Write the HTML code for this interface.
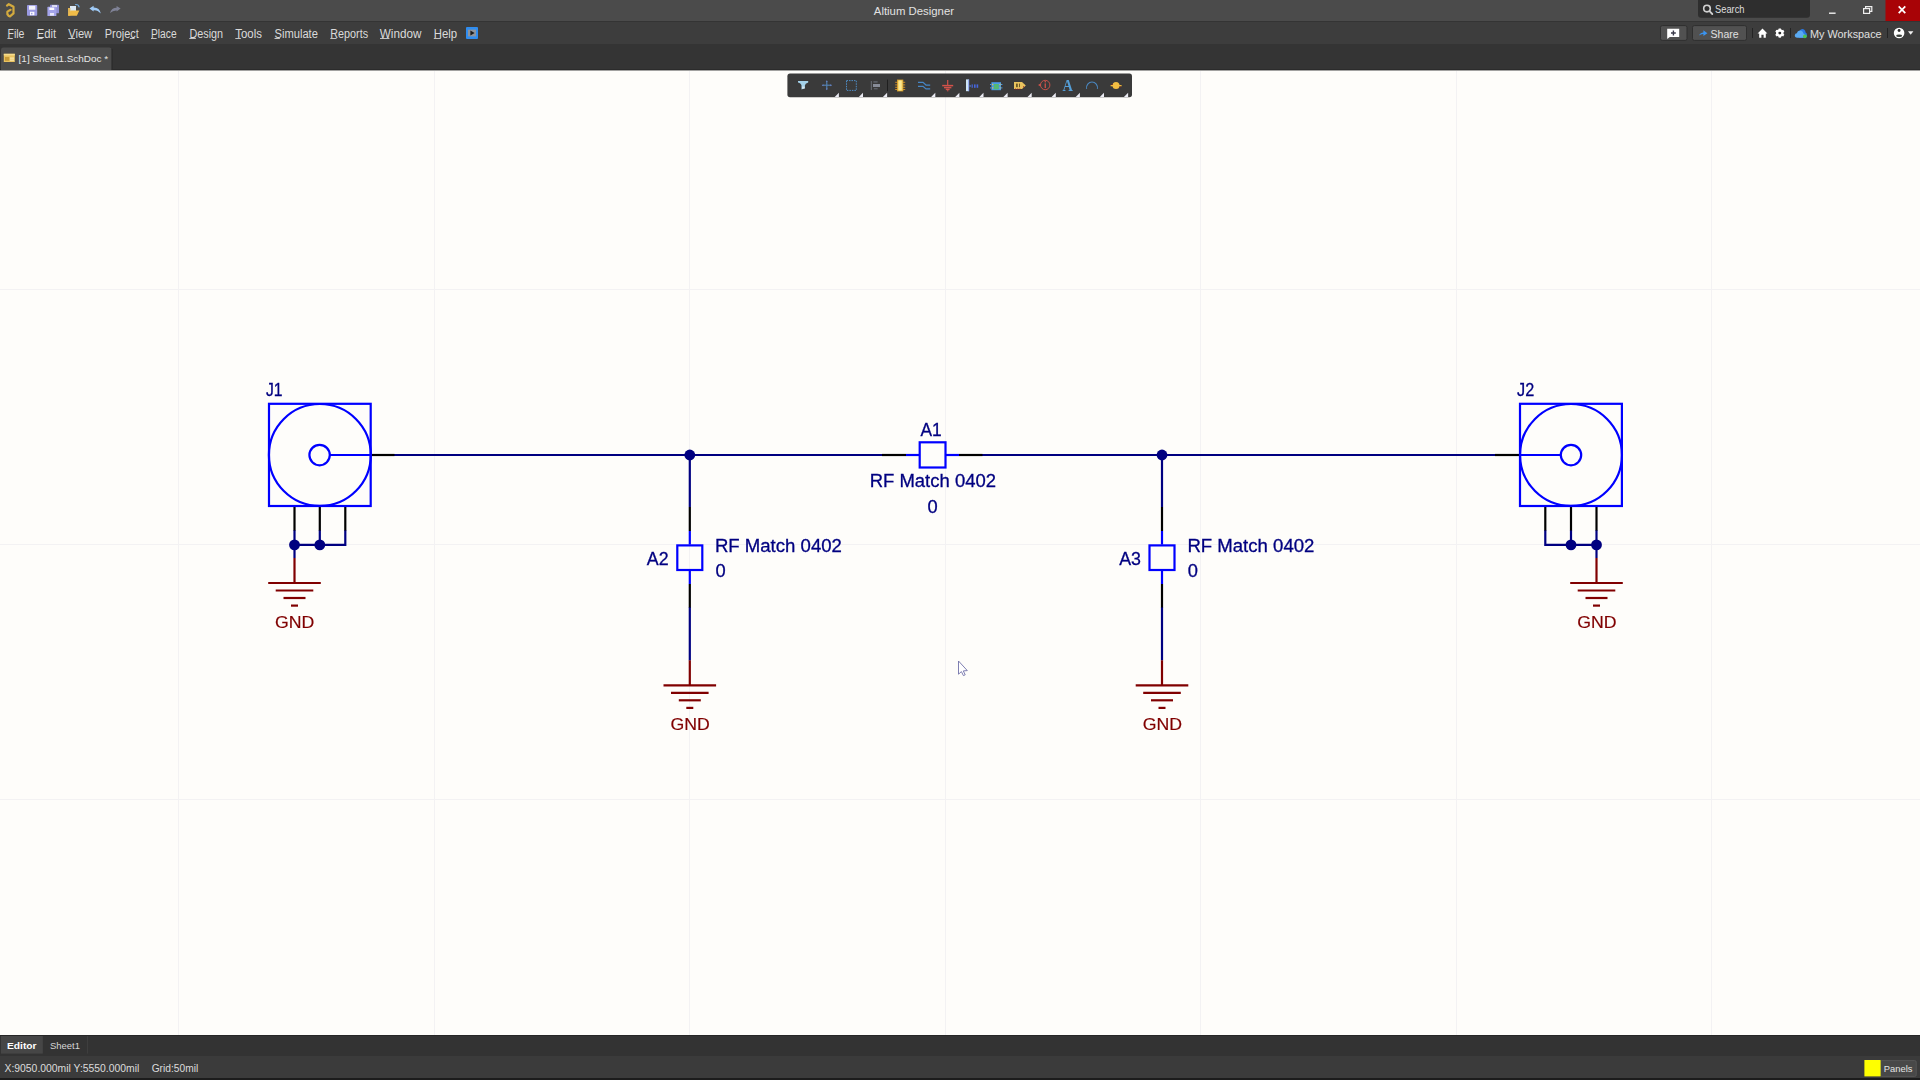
<!DOCTYPE html>
<html><head><meta charset="utf-8"><title>Altium Designer</title>
<style>
*{box-sizing:border-box;margin:0;padding:0}
html,body{width:1920px;height:1080px;overflow:hidden;background:#fefdfa;font-family:"Liberation Sans",sans-serif;}
.abs{position:absolute}
#title{left:0;top:0;width:1920px;height:21px;background:#4b4b4b}
#menu{left:0;top:21px;width:1920px;height:23px;background:#3d3d3d;border-top:1px solid #343434}
#tabs{left:0;top:44px;width:1920px;height:26px;background:#343434;border-bottom:1px solid #2b2b2b}
#canvas{left:0;top:70px;width:1920px;height:965px;background:#fefdfa}
#btabs{left:0;top:1035px;width:1920px;height:21px;background:#333333}
#status{left:0;top:1056px;width:1920px;height:24px;background:#3b3b3b}
.t{position:absolute;white-space:nowrap;line-height:1;color:#dcdcdc}
.m{font-size:12px;top:28px}
.m u{text-decoration:underline;text-underline-offset:1px}
</style></head><body>
<div id="title" class="abs"></div>
<div id="menu" class="abs"></div>
<div id="tabs" class="abs"></div>
<div id="canvas" class="abs"></div>
<div id="btabs" class="abs"></div>
<div id="status" class="abs"></div>
<!--TOP_START--><svg class="abs" style="left:0;top:0" width="1920" height="70" viewBox="0 0 1920 70" font-family="Liberation Sans, sans-serif">
<!-- title text -->
<text x="873.8" y="14.9" font-size="11.5" fill="#e2e2e2" textLength="80.2" lengthAdjust="spacingAndGlyphs">Altium Designer</text>
<!-- search box -->
<rect x="1698" y="-3" width="112" height="20.8" rx="3" fill="#2e2e2e"/>
<circle cx="1707" cy="8.6" r="3.3" fill="none" stroke="#d0d0d0" stroke-width="1.6"/>
<line x1="1709.5" y1="11.2" x2="1712.3" y2="14" stroke="#d0d0d0" stroke-width="1.8" stroke-linecap="round"/>
<text x="1715" y="12.8" font-size="10" fill="#dedede" textLength="29.5" lengthAdjust="spacingAndGlyphs">Search</text>
<!-- window buttons -->
<rect x="1829" y="12.5" width="6.6" height="1.4" fill="#f0f0f0"/>
<g fill="none" stroke="#f0f0f0" stroke-width="1.2"><rect x="1863.6" y="8.6" width="6" height="4.8"/><path d="M1865.6 8.4 V6.6 H1871.8 V11.4 H1869.8"/></g>
<rect x="1885.5" y="0" width="34.5" height="21" fill="#a80306"/>
<path d="M1898.7 6.3 L1905.3 13.1 M1905.3 6.3 L1898.7 13.1" stroke="#ffffff" stroke-width="1.7" fill="none"/>
<!-- quick access icons -->
<g id="qa">
<path d="M10.6 9.8 L7.4 11.6 V14.2 L8.8 16 L10 16.4 L13.5 13.4 V6.8 L8.8 4.2 L7 5.6" fill="none" stroke="#d3aa3e" stroke-width="2.2" stroke-linejoin="round" stroke-linecap="round"/>
<rect x="27" y="5" width="10.2" height="10.7" rx="0.8" fill="#9a9ae2"/>
<rect x="29" y="5.8" width="6.3" height="3.9" fill="#f4f4fb"/>
<rect x="30" y="11.8" width="4.4" height="3.4" fill="#fbfbff"/><rect x="31.2" y="12.8" width="1.2" height="1.6" fill="#8c8ce0"/>
<rect x="50" y="4.7" width="9" height="8.6" rx="0.6" fill="#8f8fd4"/><rect x="52" y="5.2" width="5" height="2" fill="#ececf8"/>
<rect x="47.4" y="6.8" width="9" height="9.2" rx="0.6" fill="#a4a4ea"/><rect x="49.4" y="7.6" width="4.8" height="2.4" fill="#fafaff"/><rect x="50" y="13" width="4" height="2.6" fill="#e6e6fa"/>
<rect x="70" y="6" width="6" height="6" fill="#dbe9f6"/>
<path d="M68 8 H70.4 V15.7 H68 Z" fill="#e0b354"/>
<path d="M68 15.7 L70.6 10.6 H79.4 L76.8 15.7 Z" fill="#f0bc48"/>
<path d="M75.2 4.6 Q78.6 4.2 79.2 7.4" fill="none" stroke="#6fa8dc" stroke-width="1.1"/>
<path d="M89.4 8.4 L93.6 5.8 V7.6 Q99.6 7.4 100.8 13.6 Q97.6 9.8 93.6 10.2 V11.6 Z" fill="#9fcaf6"/>
<path d="M120.6 8.6 L116.6 6 V7.8 Q111.4 7.8 110 13 Q113 10.2 116.6 10.4 V11.4 Z" fill="#7f8296"/>
</g>
<!-- menu -->
<g font-size="12.3" fill="#dadada">
<text x="7.5" y="38" textLength="17" lengthAdjust="spacingAndGlyphs">File</text>
<text x="36.8" y="38" textLength="19.4" lengthAdjust="spacingAndGlyphs">Edit</text>
<text x="68.2" y="38" textLength="24" lengthAdjust="spacingAndGlyphs">View</text>
<text x="104.8" y="38" textLength="34" lengthAdjust="spacingAndGlyphs">Project</text>
<text x="151" y="38" textLength="25.6" lengthAdjust="spacingAndGlyphs">Place</text>
<text x="189.5" y="38" textLength="33.6" lengthAdjust="spacingAndGlyphs">Design</text>
<text x="235.3" y="38" textLength="26.6" lengthAdjust="spacingAndGlyphs">Tools</text>
<text x="274.5" y="38" textLength="43.4" lengthAdjust="spacingAndGlyphs">Simulate</text>
<text x="330.3" y="38" textLength="37.8" lengthAdjust="spacingAndGlyphs">Reports</text>
<text x="379.8" y="38" textLength="41.6" lengthAdjust="spacingAndGlyphs">Window</text>
<text x="433.8" y="38" textLength="23.4" lengthAdjust="spacingAndGlyphs">Help</text>
</g>
<g fill="#dadada">
<rect x="7.4" y="38.15" width="5.4" height="0.85"/><rect x="36.8" y="38.15" width="5.8" height="0.85"/><rect x="68.2" y="38.15" width="6.8" height="0.85"/><rect x="130" y="38.15" width="4.6" height="0.85"/><rect x="151" y="38.15" width="5.6" height="0.85"/><rect x="189.3" y="38.15" width="6.6" height="0.85"/><rect x="235.3" y="38.15" width="5.6" height="0.85"/><rect x="274.5" y="38.15" width="5.4" height="0.85"/><rect x="330.3" y="38.15" width="6.2" height="0.85"/><rect x="380" y="38.15" width="9.4" height="0.85"/><rect x="433.8" y="38.15" width="7" height="0.85"/>
</g>
<!-- help video icon -->
<rect x="466" y="27" width="12" height="12" rx="1" fill="#2f8df0"/>
<rect x="468" y="29.6" width="8" height="6.8" fill="#8e949c"/>
<path d="M470.4 30.6 L474.6 33 L470.4 35.4 Z" fill="#1c1c1c"/>
<!-- right group -->
<rect x="1660.5" y="25.6" width="26.5" height="14.8" rx="1.8" fill="#515151" stroke="#2f2f2f" stroke-width="1"/>
<path d="M1667.2 28.8 H1679.2 V37 H1669.8 L1667.2 39 Z" fill="#ffffff"/>
<path d="M1673.4 30.6 V35.4 M1671 33 H1675.8" stroke="#3a3a4a" stroke-width="1.4"/>
<rect x="1692.5" y="25.6" width="54" height="14.8" rx="1.8" fill="#515151" stroke="#2f2f2f" stroke-width="1"/>
<path d="M1699 35.6 Q1700.4 32.4 1703.4 32.4 V30.2 L1707.4 33.2 L1703.4 36 V34 Q1701 33.8 1699 35.6 Z" fill="#3a94f0"/>
<text x="1710.6" y="37.6" font-size="11.6" fill="#e0e0e0" textLength="28" lengthAdjust="spacingAndGlyphs">Share</text>
<rect x="1752" y="28" width="1" height="10" fill="#242424"/>
<path d="M1762.5 28.6 L1757.6 33.4 H1759.2 V37.8 H1761.4 V34.8 H1763.6 V37.8 H1765.8 V33.4 H1767.4 Z" fill="#ffffff"/>
<g transform="translate(1779.8 33.1)"><circle r="2.7" fill="none" stroke="#ffffff" stroke-width="2.2"/><g stroke="#ffffff" stroke-width="2.3"><line x1="-0.00" y1="-4.60" x2="0.00" y2="4.60"/><line x1="-3.98" y1="-2.30" x2="3.98" y2="2.30"/><line x1="3.98" y1="-2.30" x2="-3.98" y2="2.30"/></g><circle r="1.45" fill="#2e2e2e"/></g>
<rect x="1790" y="28" width="1" height="10" fill="#242424"/>
<path d="M1799 37.7 Q1797 34 1799.4 31 Q1801.4 28.2 1804 29.4 Q1805.6 30.4 1805.6 32.4 Q1807.2 33 1807 35.4 Q1806.8 37.7 1804.4 37.7 Z" fill="#2a7ae6"/><path d="M1797.2 37.7 Q1794.6 37.6 1794.8 35.2 Q1795 33.4 1796.8 33.2 Q1797.4 30.6 1800 30.6 Q1802.8 30.6 1803.4 33.6 Q1805 34 1805 35.8 Q1805 37.7 1803 37.7 Z" fill="#5aaaf2"/>
<circle cx="1804.9" cy="36.3" r="1.9" fill="#4cc452"/>
<text x="1810" y="37.6" font-size="11.6" fill="#e0e0e0" textLength="71.6" lengthAdjust="spacingAndGlyphs">My Workspace</text>
<rect x="1887" y="28" width="1" height="10" fill="#242424"/>
<circle cx="1899.1" cy="33" r="5.3" fill="#ffffff"/>
<circle cx="1899.1" cy="30.5" r="1.45" fill="#2a2a2a"/>
<ellipse cx="1899.1" cy="35.7" rx="3" ry="1.25" fill="#3a3f3a"/>
<path d="M1908 31.2 H1913.4 L1910.7 34.8 Z" fill="#f0f0f0"/>
<!-- document tab -->
<path d="M1 70 V50 Q1 47.6 3.4 47.6 H109.2 Q111.6 47.6 111.6 50 V70 Z" fill="#4c4c4c"/><rect x="111.6" y="49" width="1.2" height="21" fill="#2c2c2c"/>
<rect x="3.8" y="53.8" width="11" height="8.2" fill="#e9c260"/>
<rect x="5" y="57" width="4.2" height="3.8" fill="#c79a36"/><rect x="10" y="57.6" width="4" height="1" fill="#fff2c0"/><rect x="10" y="59.6" width="4" height="1" fill="#fff2c0"/><rect x="3.8" y="53.8" width="11" height="1.6" fill="#f6dc8c"/>
<text x="18.6" y="62.1" font-size="9.8" fill="#e6e6e6" textLength="89.6" lengthAdjust="spacingAndGlyphs">[1] Sheet1.SchDoc *</text>
</svg>
<!--TOP_END-->
<!--MENU-->
<!--TABS-->
<!--SCHEM_START--><svg class="abs" style="left:0;top:0;will-change:transform" width="1920" height="1080" viewBox="0 0 1920 1080">
<defs>
<g id="gnd" stroke="#800000" stroke-width="2.2" fill="none">
<line x1="0" y1="0" x2="0" y2="25"/>
<line x1="-26.3" y1="25" x2="26.3" y2="25"/>
<line x1="-18.8" y1="32.5" x2="18.8" y2="32.5"/>
<line x1="-11" y1="40" x2="11" y2="40"/>
<line x1="-3.5" y1="47.6" x2="3.5" y2="47.6"/>
</g>
</defs>
<!-- grid -->
<g fill="#f3f2f3">
<rect x="178" y="70" width="1" height="965"/><rect x="434" y="70" width="1" height="965"/><rect x="689" y="70" width="1" height="965"/><rect x="945" y="70" width="1" height="965"/><rect x="1200" y="70" width="1" height="965"/><rect x="1456" y="70" width="1" height="965"/><rect x="1711" y="70" width="1" height="965"/>
<rect x="0" y="289" width="1920" height="1"/><rect x="0" y="544" width="1920" height="1"/><rect x="0" y="799" width="1920" height="1"/>
</g>
<rect x="0" y="70" width="1920" height="1" fill="#a2a2a0"/>
<!-- wires (navy) -->
<g stroke="#000080" stroke-width="2.2" fill="none">
<line x1="394" y1="455" x2="882" y2="455"/>
<line x1="982" y1="455" x2="1495.5" y2="455"/>
<line x1="689.8" y1="455" x2="689.8" y2="507"/>
<line x1="689.8" y1="607" x2="689.8" y2="660.5"/>
<line x1="1162" y1="455" x2="1162" y2="507"/>
<line x1="1162" y1="607" x2="1162" y2="660.5"/>
<polyline points="294.5,530 294.5,558"/>
<polyline points="319.8,530 319.8,544.9"/>
<polyline points="345.3,530 345.3,544.9 294.5,544.9"/>
<polyline points="1596.5,530 1596.5,558"/>
<polyline points="1571,530 1571,544.9"/>
<polyline points="1545.3,530 1545.3,544.9 1596.5,544.9"/>
</g>
<!-- pins (black) -->
<g stroke="#000000" stroke-width="2.2" fill="none">
<line x1="371.5" y1="455" x2="394.5" y2="455"/>
<line x1="1495" y1="455" x2="1519" y2="455"/>
<line x1="882" y1="455" x2="906" y2="455"/>
<line x1="959" y1="455" x2="982.5" y2="455"/>
<line x1="689.8" y1="507" x2="689.8" y2="531"/>
<line x1="689.8" y1="584" x2="689.8" y2="607.5"/>
<line x1="1162" y1="507" x2="1162" y2="531"/>
<line x1="1162" y1="584" x2="1162" y2="607.5"/>
<line x1="294.5" y1="507" x2="294.5" y2="530.5"/><line x1="319.8" y1="507" x2="319.8" y2="530.5"/><line x1="345.3" y1="507" x2="345.3" y2="530.5"/>
<line x1="1545.3" y1="507" x2="1545.3" y2="530.5"/><line x1="1571" y1="507" x2="1571" y2="530.5"/><line x1="1596.5" y1="507" x2="1596.5" y2="530.5"/>
</g>
<!-- symbols (blue) -->
<g stroke="#0000ff" stroke-width="2.2" fill="none">
<rect x="269" y="403.8" width="101.7" height="102.2"/>
<circle cx="319.85" cy="454.95" r="50.95"/>
<circle cx="319.6" cy="455.1" r="10.2"/>
<line x1="330" y1="455" x2="371" y2="455"/>
<rect x="1520" y="403.8" width="101.9" height="102.2"/>
<circle cx="1571" cy="454.95" r="50.95"/>
<circle cx="1571" cy="455.1" r="10.2"/>
<line x1="1519.5" y1="455" x2="1560.6" y2="455"/>
<rect x="919.7" y="442.3" width="25.8" height="25.2"/>
<line x1="906" y1="455" x2="919" y2="455"/><line x1="946" y1="455" x2="959" y2="455"/>
<rect x="677.3" y="545.4" width="25" height="24.6"/>
<line x1="689.8" y1="531" x2="689.8" y2="544.6"/><line x1="689.8" y1="571" x2="689.8" y2="584"/>
<rect x="1149.5" y="545.4" width="25" height="24.6"/>
<line x1="1162" y1="531" x2="1162" y2="544.6"/><line x1="1162" y1="571" x2="1162" y2="584"/>
</g>
<!-- junctions -->
<g fill="#000080">
<circle cx="689.8" cy="455" r="5.4"/><circle cx="1162" cy="455" r="5.4"/>
<circle cx="294.5" cy="544.9" r="5.4"/><circle cx="319.8" cy="544.9" r="5.4"/>
<circle cx="1571" cy="544.9" r="5.4"/><circle cx="1596.5" cy="544.9" r="5.4"/>
</g>
<!-- power ports -->
<use href="#gnd" x="294.5" y="558"/>
<use href="#gnd" x="689.8" y="660.3"/>
<use href="#gnd" x="1162" y="660.3"/>
<use href="#gnd" x="1596.5" y="558"/>
<!-- text -->
<g font-family="Liberation Sans, sans-serif" font-size="18.3" fill="#000080" stroke="#000080" stroke-width="0.3">
<text x="265.9" y="395.8" textLength="16.6" lengthAdjust="spacingAndGlyphs">J1</text>
<text x="1517" y="395.8" textLength="17.2" lengthAdjust="spacingAndGlyphs">J2</text>
<text x="920.4" y="436" textLength="21.2" lengthAdjust="spacingAndGlyphs">A1</text>
<text x="869.7" y="487.2" textLength="126.3" lengthAdjust="spacingAndGlyphs">RF Match 0402</text>
<text x="927.5" y="513.2">0</text>
<text x="646.8" y="564.6" textLength="21.8" lengthAdjust="spacingAndGlyphs">A2</text>
<text x="714.9" y="552" textLength="127" lengthAdjust="spacingAndGlyphs">RF Match 0402</text>
<text x="715.4" y="577.2">0</text>
<text x="1119.2" y="564.6" textLength="21.8" lengthAdjust="spacingAndGlyphs">A3</text>
<text x="1187.4" y="552" textLength="127" lengthAdjust="spacingAndGlyphs">RF Match 0402</text>
<text x="1187.8" y="577.2">0</text>
</g>
<g font-family="Liberation Sans, sans-serif" font-size="17" fill="#800000" stroke="#800000" stroke-width="0.2" text-anchor="middle">
<text x="294.7" y="628" textLength="39.3" lengthAdjust="spacingAndGlyphs">GND</text>
<text x="690.1" y="730" textLength="39.3" lengthAdjust="spacingAndGlyphs">GND</text>
<text x="1162.3" y="730" textLength="39.3" lengthAdjust="spacingAndGlyphs">GND</text>
<text x="1596.8" y="628" textLength="39.3" lengthAdjust="spacingAndGlyphs">GND</text>
</g>
<!-- cursor -->
<path d="M958.5 661 L958.5 674.2 L961.4 671.6 L963.4 675.6 L965.2 674.8 L963.3 670.9 L967.3 670.6 Z" fill="#ffffff" stroke="#7070a8" stroke-width="0.9" stroke-linejoin="round"/>
</svg>
<!--SCHEM_END-->
<!--TB_START--><svg class="abs" style="left:780px;top:70px" width="360" height="34" viewBox="780 70 360 34" font-family="Liberation Sans, sans-serif">
<rect x="787.4" y="73.6" width="344.6" height="23.6" rx="2.6" fill="#3a3a3a"/>
<g fill="#ececf4"><path d="M838.9 92.8 V97 H834.7 Z"/><path d="M863.0 92.8 V97 H858.8 Z"/><path d="M887.1 92.8 V97 H882.9 Z"/><path d="M935.3 92.8 V97 H931.1 Z"/><path d="M959.4 92.8 V97 H955.2 Z"/><path d="M983.5 92.8 V97 H979.3 Z"/><path d="M1007.6 92.8 V97 H1003.4 Z"/><path d="M1031.7 92.8 V97 H1027.5 Z"/><path d="M1055.8 92.8 V97 H1051.6 Z"/><path d="M1079.9 92.8 V97 H1075.7 Z"/><path d="M1104.0 92.8 V97 H1099.8 Z"/><path d="M1128.1 92.8 V97 H1123.9 Z"/></g>
<!-- filter -->
<path d="M798 81 H808.2 V82.4 Q805 83.4 804.9 85.6 V88.2 L801.5 89.4 V85.6 Q801.4 83.4 798 82.4 Z" fill="#a4d2ea"/><rect x="802" y="86.6" width="2.6" height="2" fill="#d4e6f0"/>
<!-- plus/move -->
<g stroke="#5484b6" stroke-width="1.1" fill="none"><line x1="826.8" y1="81" x2="826.8" y2="89.6"/><line x1="822.6" y1="85.2" x2="831.2" y2="85.2"/></g><g fill="#6a86d0"><path d="M821.8 85.2 L823.4 84.2 V86.2Z"/><path d="M832 85.2 L830.4 84.2 V86.2Z"/><path d="M826.8 80.2 L825.9 81.8 H827.7Z"/><path d="M826.8 90.2 L825.9 88.6 H827.7Z"/></g>
<!-- selection rect -->
<rect x="846.5" y="80.6" width="9.8" height="9.8" fill="none" stroke="#4f8cc4" stroke-width="1" stroke-dasharray="1.5 1"/>
<!-- align (disabled) -->
<rect x="870.8" y="81" width="1" height="9" fill="#6c7078"/><rect x="873.4" y="81.2" width="4.2" height="1.4" fill="#62666e"/><rect x="873" y="84" width="7" height="3" fill="#878c98"/><rect x="873.8" y="88" width="3.8" height="1.4" fill="#5c6068"/>
<rect x="887" y="79.6" width="1" height="11.6" fill="#1f1f1f"/>
<!-- part -->
<g fill="#c98a28"><rect x="895.2" y="81.8" width="10" height="1"/><rect x="895.2" y="84.4" width="10" height="1"/><rect x="895.2" y="86.8" width="10" height="1"/><rect x="895.2" y="89" width="10" height="1"/></g>
<rect x="897.5" y="80" width="5.4" height="11" fill="#f6d671" stroke="#dda22a" stroke-width="0.8"/><rect x="899" y="80.6" width="2.4" height="9.8" fill="#fbe792"/>
<!-- wire -->
<g stroke="#4686c6" stroke-width="1.25" fill="none"><path d="M918 82.4 H923 L926 85 H930.2"/><path d="M918 86.3 H923 L926 88.9 H930.2"/></g>
<!-- gnd -->
<g stroke="#d2524a" fill="none"><line x1="947.7" y1="80" x2="947.7" y2="85.6" stroke-width="1.2"/><line x1="942.2" y1="85.6" x2="953.2" y2="85.6" stroke-width="1.5"/><line x1="944" y1="87.6" x2="951.4" y2="87.6" stroke-width="1.5"/><line x1="945.8" y1="89.4" x2="949.6" y2="89.4" stroke-width="1.5"/><line x1="947" y1="90.8" x2="948.4" y2="90.8" stroke-width="1"/></g>
<!-- bus -->
<rect x="966" y="79.4" width="3" height="11.8" fill="#cfe6f6"/><rect x="968.4" y="79.4" width="0.8" height="11.8" fill="#6f86ea"/>
<path d="M969.4 86 H971" stroke="#5a8ae0" stroke-width="1"/>
<g fill="#4666dc"><rect x="971.6" y="84.4" width="1.2" height="3.4"/><rect x="974" y="84.4" width="1.6" height="3.4"/><rect x="976.6" y="84.4" width="1.6" height="3.4"/></g>
<!-- sheet symbol -->
<rect x="991.4" y="82.2" width="9.6" height="8" fill="#4a9be8"/><rect x="993.8" y="84" width="5" height="5.4" fill="#53b874"/>
<g fill="#4a9be8"><rect x="990" y="84" width="1.4" height="1"/><rect x="990" y="87.4" width="1.4" height="1"/><rect x="1001" y="84" width="1.4" height="1"/><rect x="1001" y="87.4" width="1.4" height="1"/></g>
<g fill="#e8c050"><path d="M992 83.6 L993.6 84.5 L992 85.4Z"/><path d="M992 87 L993.6 87.9 L992 88.8Z"/><path d="M1000.6 83.6 L999 84.5 L1000.6 85.4Z"/><path d="M1000.6 87 L999 87.9 L1000.6 88.8Z"/></g>
<!-- port -->
<path d="M1014 82 H1022 L1025.8 85.5 L1022 89 H1014 Z" fill="#e9c35e"/>
<g fill="#6e5a26"><rect x="1016" y="83.6" width="1.8" height="3.6"/><rect x="1019" y="83.6" width="1" height="3.6"/></g>
<g fill="#a0141a"><rect x="1015" y="88.6" width="1" height="1"/><rect x="1017.2" y="88.6" width="1" height="1"/><rect x="1019.4" y="88.6" width="1" height="1"/><rect x="1023" y="86.4" width="1" height="1"/></g>
<!-- directive -->
<circle cx="1045.2" cy="85" r="4.7" fill="none" stroke="#c9524a" stroke-width="0.95"/><path d="M1038 85 L1040.6 83.6 V86.4 Z" fill="#d2524a"/><rect x="1044.6" y="81" width="1.3" height="1.4" fill="#d2524a"/><rect x="1044.6" y="83.4" width="1.3" height="4.6" fill="#d2524a"/>
<!-- text A -->
<text x="1062.6" y="91" font-family="Liberation Serif, serif" font-size="16" font-weight="bold" fill="#549fd8" textLength="10.4" lengthAdjust="spacingAndGlyphs">A</text>
<!-- arc -->
<path d="M1086.6 88.8 A5.5 5.7 0 1 1 1097.4 88.8" fill="none" stroke="#4a86be" stroke-width="1.1"/>
<!-- dot -->
<rect x="1110.6" y="85" width="11" height="1.3" fill="#f0b838"/><circle cx="1116" cy="85.6" r="3.5" fill="#f2bd42"/>
<rect x="1111.6" y="84" width="1" height="1" fill="#8a1818"/><rect x="1119.6" y="86.6" width="1" height="1" fill="#8a1818"/>
</svg><!--TB_END-->
<!--BT_START--><svg class="abs" style="left:0;top:1035px" width="1920" height="45" viewBox="0 1035 1920 45" font-family="Liberation Sans, sans-serif">
<rect x="0" y="1035" width="1920" height="21" fill="#333333"/><rect x="0" y="1056" width="1920" height="24" fill="#3b3b3b"/><rect x="0" y="1035" width="1920" height="1" fill="#262626"/>
<rect x="1" y="1036" width="41.8" height="17.6" fill="#464646"/>
<rect x="87" y="1036" width="1" height="17.6" fill="#3e3e3e"/>
<text x="7" y="1049" font-size="9.5" font-weight="bold" fill="#ffffff" textLength="29.6" lengthAdjust="spacingAndGlyphs">Editor</text>
<text x="50" y="1049" font-size="9.5" fill="#d6d6d6" textLength="30" lengthAdjust="spacingAndGlyphs">Sheet1</text>
<text x="4.5" y="1071.6" font-size="10.4" fill="#dcdcdc" textLength="134.8" lengthAdjust="spacingAndGlyphs">X:9050.000mil Y:5550.000mil</text>
<text x="151.7" y="1071.6" font-size="10.4" fill="#dcdcdc" textLength="46.5" lengthAdjust="spacingAndGlyphs">Grid:50mil</text>
<rect x="1880.4" y="1060.6" width="35.8" height="15.8" rx="1.5" fill="#484848" stroke="#565656" stroke-width="1"/>
<rect x="1864.4" y="1060" width="16.2" height="16.4" fill="#ffff00"/>
<text x="1883.8" y="1072" font-size="9.5" fill="#e4e4e4" textLength="28.6" lengthAdjust="spacingAndGlyphs">Panels</text>
<rect x="0" y="1078" width="1920" height="2" fill="#1c1c1c"/>
</svg><!--BT_END-->
</body></html>
